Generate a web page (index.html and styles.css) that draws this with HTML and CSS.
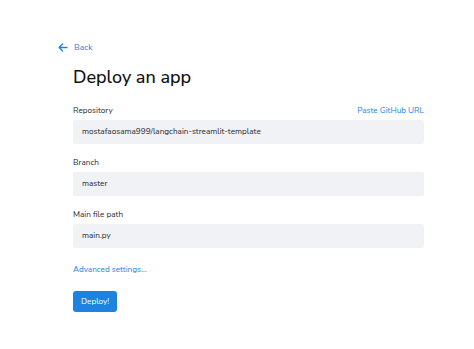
FILE: index.html
```html
<!DOCTYPE html>
<html lang="en">
<head>
    <meta charset="UTF-8">
    <title>Deploy an app</title>
    <link rel="stylesheet" href="styles.css">
</head>
<body>
    <div class="page">
        <a class="back" href="#">
            <svg width="10" height="9" viewBox="0 0 10 9" fill="none" stroke="#1c83e1" stroke-width="1.3" stroke-linecap="round" stroke-linejoin="round">
                <path d="M9 4.5H1.2M4.6 1L1.1 4.5L4.6 8"/>
            </svg>
            <span>Back</span>
        </a>

        <h1 class="title">Deploy an app</h1>

        <div class="field">
            <div class="label-row">
                <span class="label">Repository</span>
                <a class="link" href="#">Paste GitHub URL</a>
            </div>
            <div class="input">mostafaosama999/langchain-streamlit-template</div>
        </div>

        <div class="field">
            <div class="label-row">
                <span class="label">Branch</span>
            </div>
            <div class="input">master</div>
        </div>

        <div class="field">
            <div class="label-row">
                <span class="label">Main file path</span>
            </div>
            <div class="input">main.py</div>
        </div>

        <a class="link advanced" href="#">Advanced settings...</a>

        <button class="deploy">Deploy!</button>
    </div>
</body>
</html>
```

FILE: styles.css
```css
body {
    margin: 0;
    background: #fff;
    font-family: "Nunito Sans", "Noto Sans", sans-serif;
    color: #262730;
}
.page {
    width: 351px;
    padding: 41px 0 0 73px;
}
.back {
    display: flex;
    align-items: center;
    gap: 6px;
    margin-left: -15px;
    height: 12px;
    font-size: 8.5px;
    color: #1c83e1;
    text-decoration: none;
}
.title {
    margin: 12px 0 15px;
    font-size: 18px;
    line-height: 24px;
    font-weight: 500;
    color: #111;
}
.field {
    margin-bottom: 12px;
}
.label-row {
    display: flex;
    justify-content: space-between;
    align-items: center;
    height: 12px;
    margin-bottom: 4px;
}
.label {
    font-size: 8.2px;
}
.link {
    font-size: 8.2px;
    color: #1c83e1;
    text-decoration: none;
}
.input {
    height: 24px;
    line-height: 24px;
    padding-left: 9px;
    background: #f0f2f6;
    font-size: 8.2px;
    border-radius: 2px;
}
.advanced {
    display: block;
    margin-top: 16px;
    line-height: 12px;
}
.deploy {
    display: block;
    margin-top: 15px;
    height: 21px;
    padding: 0 8px;
    border: none;
    border-radius: 3px;
    background: #1c83e1;
    color: #fff;
    font-family: inherit;
    font-size: 8.2px;
}
```
